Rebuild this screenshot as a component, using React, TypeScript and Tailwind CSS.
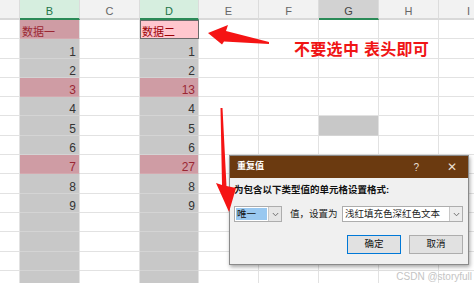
import React from 'react'

type CellKind = 'white' | 'gray' | 'pink' | 'active'

interface Col {
  key: string
  width: string
  label: string
  header: 'plain' | 'picked' | 'grey'
}

const COLS: Col[] = [
  { key: 'A', width: 'w-[20px]', label: '', header: 'plain' },
  { key: 'B', width: 'w-[60px]', label: 'B', header: 'picked' },
  { key: 'C', width: 'w-[60px]', label: 'C', header: 'plain' },
  { key: 'D', width: 'w-[59px]', label: 'D', header: 'picked' },
  { key: 'E', width: 'w-[60px]', label: 'E', header: 'plain' },
  { key: 'F', width: 'w-[60px]', label: 'F', header: 'plain' },
  { key: 'G', width: 'w-[60px]', label: 'G', header: 'grey' },
  { key: 'H', width: 'w-[60px]', label: 'H', header: 'plain' },
  { key: 'I', width: 'w-[60px]', label: 'I', header: 'plain' },
]

const ROW_COUNT = 14

const colB: (string | number | null)[] = ['数据一', 1, 2, 3, 4, 5, 6, 7, 8, 9]
const colD: (string | number | null)[] = ['数据二', 1, 2, 13, 4, 5, 6, 27, 8, 9]
const pinkRows = [0, 3, 7]

function cellKind(col: string, row: number): CellKind {
  if (col === 'B') return pinkRows.includes(row) ? 'pink' : 'gray'
  if (col === 'D') {
    if (row === 0) return 'active'
    return pinkRows.includes(row) ? 'pink' : 'gray'
  }
  if (col === 'G' && row === 5) return 'gray'
  return 'white'
}

function cellValue(col: string, row: number) {
  if (col === 'B') return colB[row] ?? null
  if (col === 'D') return colD[row] ?? null
  return null
}

function HeaderCell({ col }: { col: Col }) {
  const tone =
    col.header === 'picked'
      ? 'bg-[#d6eedf] text-[#217346] border-b-[#2a8a57]'
      : col.header === 'grey'
        ? 'bg-[#d2d2d2] text-[#444] border-b-[#2a8a57]'
        : 'bg-[#f2f2f2] text-[#666] border-b-[#d9d9d9]'
  return (
    <div
      className={`${col.width} flex h-[20px] shrink-0 items-center justify-center border-r border-b-2 border-r-[#dcdcdc] pt-[4px] text-[11px] ${tone}`}
    >
      {col.label}
    </div>
  )
}

function Cell({ col, row }: { col: Col; row: number }) {
  const kind = cellKind(col.key, row)
  const value = cellValue(col.key, row)
  const isText = typeof value === 'string'
  const tone =
    kind === 'gray'
      ? 'bg-[#c8c8c8] text-[#333] border-b-[#d4d4d4]'
      : kind === 'pink'
        ? 'bg-[#cf9ca4] text-[#9a2733] border-b-[#d4a9af]'
        : kind === 'active'
          ? 'bg-[#ffc7ce] text-[#9c0006] outline outline-1 -outline-offset-1 outline-[#6b6b6b] border-b-[#e2e2e2]'
          : 'bg-white border-b-[#e2e2e2]'
  return (
    <div
      className={`${col.width} flex h-[19.3px] shrink-0 items-end border-r border-b border-r-[#e2e2e2] pb-[0px] leading-none ${
        isText ? 'justify-start pl-[2px] text-[11px]' : 'justify-end pr-[3px] text-[12px]'
      } ${tone}`}
    >
      {value}
    </div>
  )
}

function Arrows() {
  return (
    <svg className="pointer-events-none absolute inset-0 h-full w-full" viewBox="0 0 474 283">
      <polygon points="208,33 228,25 226,31 269,42 269,44 224,41.5 222,44.5" fill="#f51414" />
      <polygon points="220.5,108 222.5,108 226.5,186 236,188 229,212 216,183 222,185" fill="#f51414" />
    </svg>
  )
}

function Chevron() {
  return (
    <svg width="7" height="5" viewBox="0 0 7 5">
      <path d="M0.8 1 L3.5 3.8 L6.2 1" fill="none" stroke="#666" strokeWidth="0.9" />
    </svg>
  )
}

function DuplicateDialog() {
  return (
    <div className="absolute left-[229px] top-[155px] flex h-[110px] w-[240px] flex-col border border-[#8a8a8a] bg-[#f0f0f0] shadow-[1px_2px_4px_rgba(0,0,0,0.35)]">
      <div className="flex h-[22px] shrink-0 items-center bg-[#6b3a10] pl-[7px] text-[9px] font-bold text-white">
        <span>重复值</span>
        <span className="ml-auto mr-[28px] text-[10px] font-normal text-[#eadfd2]">?</span>
        <span className="mr-[11px] text-[12px] font-normal leading-none text-[#eadfd2]">✕</span>
      </div>
      <div className="flex flex-col px-[4px]">
        <p className="mt-[6px] text-[9.5px] font-bold leading-[12px] text-[#111]">
          为包含以下类型值的单元格设置格式:
        </p>
        <div className="mt-[10px] flex h-[16px] items-center">
          <div className="flex h-[16px] w-[48px] items-stretch border border-[#adadad] bg-white">
            <div className="m-[1px] flex flex-1 items-center bg-[#99c8f0] pl-[1px] text-[9.5px] text-[#111]">
              唯一
            </div>
            <div className="flex w-[13px] items-center justify-center border-l border-[#c8c8c8] bg-[#e6e6e6]">
              <Chevron />
            </div>
          </div>
          <span className="ml-[8px] text-[9.5px] text-[#222]">值，设置为</span>
          <div className="ml-auto mr-[1px] flex h-[16px] w-[121px] items-stretch border border-[#adadad] bg-white">
            <div className="flex flex-1 items-center pl-[2px] text-[9.5px] text-[#222]">浅红填充色深红色文本</div>
            <div className="flex w-[13px] items-center justify-center border-l border-[#c8c8c8] bg-[#ececec]">
              <Chevron />
            </div>
          </div>
        </div>
        <div className="mt-[13px] flex justify-end gap-[8px] pr-[1px]">
          <button
            type="button"
            className="flex h-[19px] w-[54px] items-center justify-center border border-[#0078d7] bg-[#e1e1e1] text-[9.5px] text-[#111]"
          >
            确定
          </button>
          <button
            type="button"
            className="flex h-[19px] w-[54px] items-center justify-center border border-[#adadad] bg-[#e1e1e1] text-[9.5px] text-[#111]"
          >
            取消
          </button>
        </div>
      </div>
    </div>
  )
}

export default function App() {
  const rows = Array.from({ length: ROW_COUNT }, (_, i) => i)
  return (
    <div
      className="relative h-[283px] w-[474px] overflow-hidden bg-white"
      style={{ fontFamily: '"Liberation Sans", "Noto Sans CJK SC", sans-serif' }}
    >
      <div className="flex w-max">
        {COLS.map((c) => (
          <HeaderCell key={c.key} col={c} />
        ))}
      </div>
      {rows.map((r) => (
        <div key={r} className="flex w-max">
          {COLS.map((c) => (
            <Cell key={c.key} col={c} row={r} />
          ))}
        </div>
      ))}

      <p className="absolute left-[294px] top-[38px] text-[16px] font-bold tracking-[0.3px] text-[#f01515]">
        不要选中 表头即可
      </p>

      <DuplicateDialog />
      <Arrows />

      <span className="absolute right-[2px] top-[269px] text-[10px] text-[#c4c4c4]">CSDN @storyfull</span>
    </div>
  )
}
